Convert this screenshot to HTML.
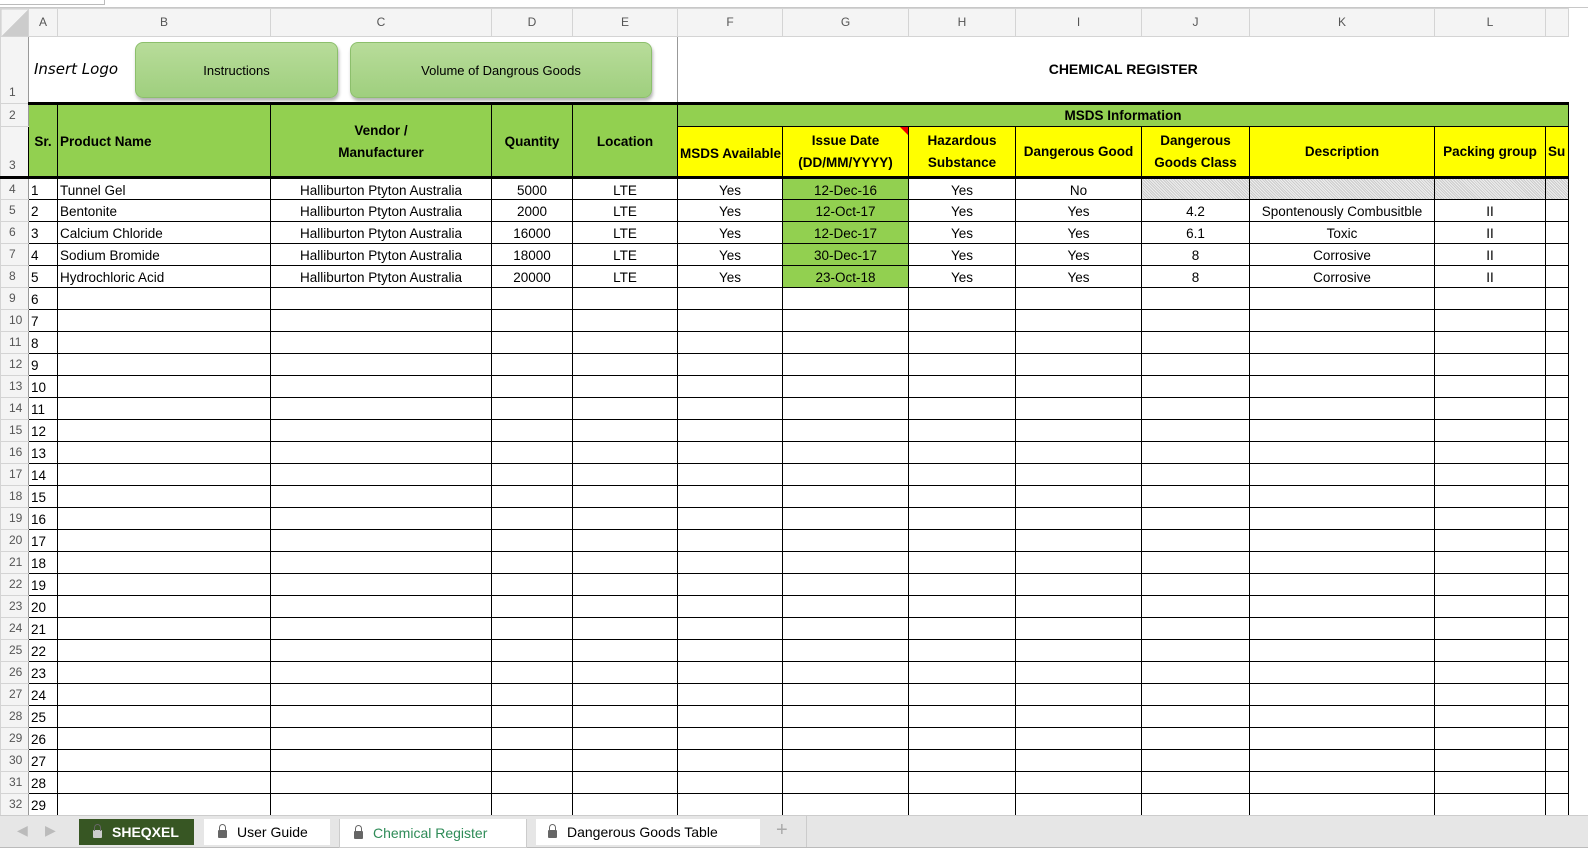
<!DOCTYPE html>
<html><head><meta charset="utf-8"><style>
*{box-sizing:border-box;margin:0;padding:0}
body{width:1588px;height:860px;overflow:hidden;background:#fff;font-family:"Liberation Sans",sans-serif;position:relative}
.top{position:absolute;left:0;top:0;width:1588px;height:8px;background:#fff;border-bottom:1px solid #c8c8c8}
.top i{position:absolute;left:0;top:0;width:105px;height:5px;border-right:1px solid #bbb;border-bottom:1px solid #bbb}
table{position:absolute;left:0;top:8px;border-collapse:collapse;table-layout:fixed;width:1568px}
td{border:1px solid #000;font-size:13.5px;color:#000;text-align:center;white-space:nowrap;overflow:hidden;padding:0 2px;line-height:15px}
tr.ch td{background:#f4f4f4;border:1px solid #d4d4d4;color:#555;font-size:12px;height:28px}
td.rh{background:#f4f4f4;border:1px solid #d4d4d4;border-right:1px solid #999;color:#555;font-size:12px;text-align:left;padding-left:8px;vertical-align:bottom;padding-bottom:3px}
tr.d{height:22px}
tr.d td{height:22px;padding-top:2px}
tr.d td.rh{padding:0 0 0 8px;vertical-align:middle}
.l{text-align:left}
.g{background:#92d050;font-weight:bold}
.y{background:#ffff00;font-weight:bold}
.gd{background:#92d050}
.dot{background:#d9d9d9 repeating-linear-gradient(45deg,#ccc 0 1px,#eee 1px 2px)}
.btn{position:absolute;top:42px;height:56px;border-radius:8px;background:linear-gradient(#b8dc9a,#9fcf7e);box-shadow:1px 3px 3px rgba(0,0,0,.3);font-size:13px;display:flex;align-items:center;justify-content:center;border:1px solid #8cbf6c}
.tabs{position:absolute;left:0;top:815px;width:1588px;height:33px;background:#e6e6e6;border-top:1px solid #ccc;border-bottom:1px solid #bbb}
.tab{position:absolute;top:3px;height:26px;background:#fff;font-size:14px;display:flex;align-items:center;padding-left:14px}
.lk{display:inline-block;width:9px;height:8px;background:#666;border-radius:1px;margin-right:10px;position:relative;top:2px}
.lk:before{content:"";position:absolute;left:1px;top:-6px;width:5px;height:6px;border:1px solid #666;border-bottom:none;border-radius:4px 4px 0 0}
</style></head><body>
<div class="top"><i></i></div>
<table>
<colgroup><col style="width:28px"><col style="width:29px"><col style="width:213px"><col style="width:221px"><col style="width:81px"><col style="width:105px"><col style="width:105px"><col style="width:126px"><col style="width:107px"><col style="width:126px"><col style="width:108px"><col style="width:185px"><col style="width:111px"><col style="width:23px"></colgroup>
<tr class="ch"><td style="background:linear-gradient(135deg,#f4f4f4 50%,#ccc 50%)"></td><td>A</td><td>B</td><td>C</td><td>D</td><td>E</td><td>F</td><td>G</td><td>H</td><td>I</td><td>J</td><td>K</td><td>L</td><td></td></tr>
<tr style="height:67px"><td class="rh">1</td><td colspan="5" style="border:none;border-bottom:3px solid #000;text-align:left;padding-left:5px;font-family:'DejaVu Sans',cursive;font-style:oblique;font-size:15px;font-weight:normal">Insert Logo</td><td colspan="8" style="border:none;border-left:1px solid #999;border-bottom:3px solid #000;font-weight:bold;font-size:14px">CHEMICAL REGISTER</td></tr>
<tr style="height:23px"><td class="rh">2</td><td class="g" rowspan="2" style="padding-top:2px;">Sr.</td><td class="g l" rowspan="2" style="padding-top:2px">Product Name</td><td class="g" rowspan="2" style="padding-top:2px;line-height:22px">Vendor /<br>Manufacturer</td><td class="g" rowspan="2" style="padding-top:2px">Quantity</td><td class="g" rowspan="2" style="padding-top:2px">Location</td><td class="g" colspan="8">MSDS Information</td></tr>
<tr style="height:51px"><td class="rh">3</td><td class="y" style="padding-top:4px">MSDS Available</td><td class="y" style="line-height:22px;position:relative">Issue Date<br>(DD/MM/YYYY)<span style="position:absolute;right:0;top:0;border-top:8px solid #e00;border-left:8px solid transparent"></span></td><td class="y" style="line-height:22px">Hazardous<br>Substance</td><td class="y">Dangerous Good</td><td class="y" style="line-height:22px">Dangerous<br>Goods Class</td><td class="y">Description</td><td class="y">Packing group</td><td class="y l">Su</td></tr>
<tr class="d" style="border-top:3px solid #000"><td class="rh">4</td><td class="l">1</td><td class="l">Tunnel Gel</td><td>Halliburton Ptyton Australia</td><td>5000</td><td>LTE</td><td>Yes</td><td class="gd">12-Dec-16</td><td>Yes</td><td>No</td><td class="dot"></td><td class="dot"></td><td class="dot"></td><td class="dot"></td></tr>
<tr class="d"><td class="rh">5</td><td class="l">2</td><td class="l">Bentonite</td><td>Halliburton Ptyton Australia</td><td>2000</td><td>LTE</td><td>Yes</td><td class="gd">12-Oct-17</td><td>Yes</td><td>Yes</td><td>4.2</td><td>Spontenously Combusitble</td><td>II</td><td></td></tr>
<tr class="d"><td class="rh">6</td><td class="l">3</td><td class="l">Calcium Chloride</td><td>Halliburton Ptyton Australia</td><td>16000</td><td>LTE</td><td>Yes</td><td class="gd">12-Dec-17</td><td>Yes</td><td>Yes</td><td>6.1</td><td>Toxic</td><td>II</td><td></td></tr>
<tr class="d"><td class="rh">7</td><td class="l">4</td><td class="l">Sodium Bromide</td><td>Halliburton Ptyton Australia</td><td>18000</td><td>LTE</td><td>Yes</td><td class="gd">30-Dec-17</td><td>Yes</td><td>Yes</td><td>8</td><td>Corrosive</td><td>II</td><td></td></tr>
<tr class="d"><td class="rh">8</td><td class="l">5</td><td class="l">Hydrochloric Acid</td><td>Halliburton Ptyton Australia</td><td>20000</td><td>LTE</td><td>Yes</td><td class="gd">23-Oct-18</td><td>Yes</td><td>Yes</td><td>8</td><td>Corrosive</td><td>II</td><td></td></tr>
<tr class="d"><td class="rh">9</td><td class="l">6</td><td></td><td></td><td></td><td></td><td></td><td></td><td></td><td></td><td></td><td></td><td></td><td></td></tr>
<tr class="d"><td class="rh">10</td><td class="l">7</td><td></td><td></td><td></td><td></td><td></td><td></td><td></td><td></td><td></td><td></td><td></td><td></td></tr>
<tr class="d"><td class="rh">11</td><td class="l">8</td><td></td><td></td><td></td><td></td><td></td><td></td><td></td><td></td><td></td><td></td><td></td><td></td></tr>
<tr class="d"><td class="rh">12</td><td class="l">9</td><td></td><td></td><td></td><td></td><td></td><td></td><td></td><td></td><td></td><td></td><td></td><td></td></tr>
<tr class="d"><td class="rh">13</td><td class="l">10</td><td></td><td></td><td></td><td></td><td></td><td></td><td></td><td></td><td></td><td></td><td></td><td></td></tr>
<tr class="d"><td class="rh">14</td><td class="l">11</td><td></td><td></td><td></td><td></td><td></td><td></td><td></td><td></td><td></td><td></td><td></td><td></td></tr>
<tr class="d"><td class="rh">15</td><td class="l">12</td><td></td><td></td><td></td><td></td><td></td><td></td><td></td><td></td><td></td><td></td><td></td><td></td></tr>
<tr class="d"><td class="rh">16</td><td class="l">13</td><td></td><td></td><td></td><td></td><td></td><td></td><td></td><td></td><td></td><td></td><td></td><td></td></tr>
<tr class="d"><td class="rh">17</td><td class="l">14</td><td></td><td></td><td></td><td></td><td></td><td></td><td></td><td></td><td></td><td></td><td></td><td></td></tr>
<tr class="d"><td class="rh">18</td><td class="l">15</td><td></td><td></td><td></td><td></td><td></td><td></td><td></td><td></td><td></td><td></td><td></td><td></td></tr>
<tr class="d"><td class="rh">19</td><td class="l">16</td><td></td><td></td><td></td><td></td><td></td><td></td><td></td><td></td><td></td><td></td><td></td><td></td></tr>
<tr class="d"><td class="rh">20</td><td class="l">17</td><td></td><td></td><td></td><td></td><td></td><td></td><td></td><td></td><td></td><td></td><td></td><td></td></tr>
<tr class="d"><td class="rh">21</td><td class="l">18</td><td></td><td></td><td></td><td></td><td></td><td></td><td></td><td></td><td></td><td></td><td></td><td></td></tr>
<tr class="d"><td class="rh">22</td><td class="l">19</td><td></td><td></td><td></td><td></td><td></td><td></td><td></td><td></td><td></td><td></td><td></td><td></td></tr>
<tr class="d"><td class="rh">23</td><td class="l">20</td><td></td><td></td><td></td><td></td><td></td><td></td><td></td><td></td><td></td><td></td><td></td><td></td></tr>
<tr class="d"><td class="rh">24</td><td class="l">21</td><td></td><td></td><td></td><td></td><td></td><td></td><td></td><td></td><td></td><td></td><td></td><td></td></tr>
<tr class="d"><td class="rh">25</td><td class="l">22</td><td></td><td></td><td></td><td></td><td></td><td></td><td></td><td></td><td></td><td></td><td></td><td></td></tr>
<tr class="d"><td class="rh">26</td><td class="l">23</td><td></td><td></td><td></td><td></td><td></td><td></td><td></td><td></td><td></td><td></td><td></td><td></td></tr>
<tr class="d"><td class="rh">27</td><td class="l">24</td><td></td><td></td><td></td><td></td><td></td><td></td><td></td><td></td><td></td><td></td><td></td><td></td></tr>
<tr class="d"><td class="rh">28</td><td class="l">25</td><td></td><td></td><td></td><td></td><td></td><td></td><td></td><td></td><td></td><td></td><td></td><td></td></tr>
<tr class="d"><td class="rh">29</td><td class="l">26</td><td></td><td></td><td></td><td></td><td></td><td></td><td></td><td></td><td></td><td></td><td></td><td></td></tr>
<tr class="d"><td class="rh">30</td><td class="l">27</td><td></td><td></td><td></td><td></td><td></td><td></td><td></td><td></td><td></td><td></td><td></td><td></td></tr>
<tr class="d"><td class="rh">31</td><td class="l">28</td><td></td><td></td><td></td><td></td><td></td><td></td><td></td><td></td><td></td><td></td><td></td><td></td></tr>
<tr class="d"><td class="rh">32</td><td class="l">29</td><td></td><td></td><td></td><td></td><td></td><td></td><td></td><td></td><td></td><td></td><td></td><td></td></tr>
</table>
<div class="btn" style="left:135px;width:203px">Instructions</div>
<div class="btn" style="left:350px;width:302px">Volume of Dangrous Goods</div>
<div class="tabs">
<span style="position:absolute;left:17px;top:6px;color:#bbb;font-size:14px">◀</span>
<span style="position:absolute;left:45px;top:6px;color:#bbb;font-size:14px">▶</span>
<div class="tab" style="left:79px;width:115px;background:#375623;color:#fff;font-weight:bold"><span class="lk" style="background:#ccc"></span>SHEQXEL</div>
<div class="tab" style="left:204px;width:126px"><span class="lk"></span>User Guide</div>
<div class="tab" style="left:339px;width:188px;height:29px;color:#2e8b57;border:1px solid #ccc;border-top:none"><span class="lk"></span>Chemical Register</div>
<div class="tab" style="left:536px;width:224px;padding-left:12px"><span class="lk"></span>Dangerous Goods Table</div>
<span style="position:absolute;left:776px;top:3px;color:#aaa;font-size:20px">+</span>
<div style="position:absolute;left:806px;top:0;height:31px;border-left:1px solid #ccc"></div>
</div>
</body></html>
